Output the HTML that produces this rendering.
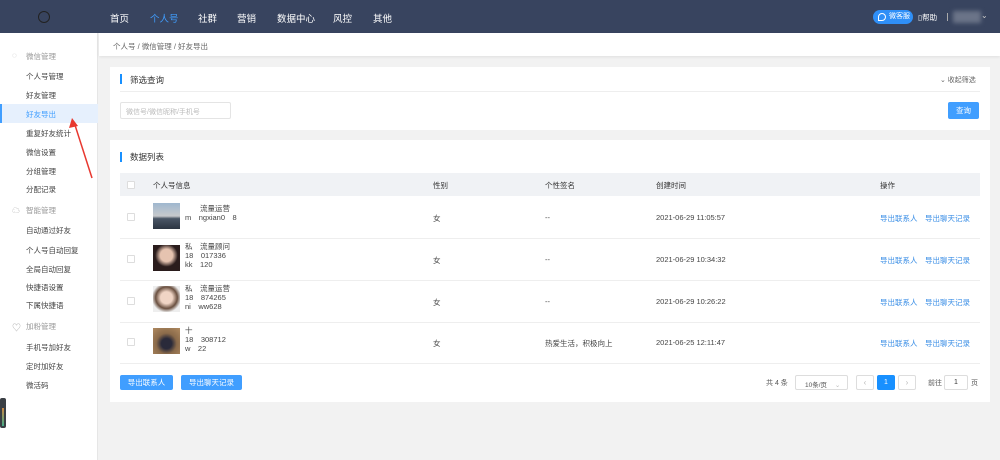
<!DOCTYPE html>
<html><head><meta charset="utf-8"><style>
*{margin:0;padding:0;box-sizing:border-box}
body{width:1000px;height:460px;overflow:hidden;background:#f2f2f2;font-family:"Liberation Sans","Noto Sans CJK SC",sans-serif;font-size:8px;color:#333;position:relative}
.abs{position:absolute}
.hdr{left:0;top:0;width:1000px;height:33px;background:#38445f}
.nav{top:11px;color:#fff;font-size:9.5px}
.side{left:0;top:33px;width:98px;height:427px;background:#fff;border-right:1px solid #e6e6e6}
.si{left:26px;font-size:7.5px;color:#444}
.sg{left:26px;font-size:7.5px;color:#999}
.card{background:#fff}
.th{font-size:7.5px;color:#333}
.cb{width:8px;height:8px;border:1px solid #ddd;border-radius:1px;background:#fff}
.td{font-size:7.5px;color:#444}
.lnk{font-size:7.5px;color:#3a8ee6}
.btn{background:#409eff;color:#fff;font-size:7.5px;text-align:center;border-radius:2px}
.bar{width:2px;height:10px;background:#1890ff}
.line{height:1px;background:#eee}
.blur{background:#e9e9ec;filter:blur(1px)}
</style></head><body>
<div class="abs hdr"></div>
<div class="abs" style="left:38px;top:11px;width:12px;height:12px;border:1.5px solid #222;border-radius:50%"></div>
<div class="abs nav" style="left:110px">首页</div>
<div class="abs nav" style="left:150px;color:#409eff">个人号</div>
<div class="abs nav" style="left:198px">社群</div>
<div class="abs nav" style="left:237px">营销</div>
<div class="abs nav" style="left:277px">数据中心</div>
<div class="abs nav" style="left:333px">风控</div>
<div class="abs nav" style="left:373px">其他</div>
<div class="abs" style="left:873px;top:10px;width:40px;height:14px;border-radius:7px;background:#2f8ff7;color:#fff;font-size:7px;line-height:14px;padding-left:16px">微客服</div>
<div class="abs" style="left:878px;top:13px;width:8px;height:8px;border:1.5px solid #fff;border-radius:50% 50% 50% 0"></div>
<div class="abs" style="left:918px;top:12px;color:#fff;font-size:7.5px">▯帮助</div>
<div class="abs" style="left:947px;top:13px;width:1px;height:8px;background:#aaa"></div>
<div class="abs" style="left:953px;top:11px;width:28px;height:12px;background:#6b7488;filter:blur(2px)"></div>
<div class="abs" style="left:981px;top:11px;color:#ccc;font-size:8px">⌄</div>

<div class="abs side"></div>
<div class="abs" style="left:12px;top:51px;color:#aaa;font-size:8px">◌</div>
<div class="abs sg" style="top:51px">微信管理</div>
<div class="abs si" style="top:71px">个人号管理</div>
<div class="abs si" style="top:90px">好友管理</div>
<div class="abs" style="left:0;top:104px;width:98px;height:19px;background:#e6f0fd;border-left:2px solid #409eff"></div>
<div class="abs si" style="top:109px;color:#409eff">好友导出</div>
<div class="abs si" style="top:128px">重复好友统计</div>
<div class="abs si" style="top:147px">微信设置</div>
<div class="abs si" style="top:166px">分组管理</div>
<div class="abs si" style="top:184px">分配记录</div>
<div class="abs" style="left:12px;top:205px;color:#aaa;font-size:8px">☁</div>
<div class="abs sg" style="top:205px">智能管理</div>
<div class="abs si" style="top:225px">自动通过好友</div>
<div class="abs si" style="top:245px">个人号自动回复</div>
<div class="abs si" style="top:264px">全局自动回复</div>
<div class="abs si" style="top:282px">快捷语设置</div>
<div class="abs si" style="top:300px">下属快捷语</div>
<div class="abs" style="left:12px;top:321px;color:#aaa;font-size:9px">♡</div>
<div class="abs sg" style="top:321px">加粉管理</div>
<div class="abs si" style="top:342px">手机号加好友</div>
<div class="abs si" style="top:361px">定时加好友</div>
<div class="abs si" style="top:380px">微活码</div>
<div class="abs" style="left:0;top:398px;width:6px;height:30px;background:#3a3f44;border-radius:2px"></div>
<div class="abs" style="left:2px;top:408px;width:2px;height:18px;background:linear-gradient(#c84,#4a8)"></div>
<svg class="abs" style="left:68px;top:118px" width="28" height="62"><line x1="24" y1="60" x2="6" y2="4" stroke="#e8382f" stroke-width="1.5"/><polygon points="4,0 1,10 10,8" fill="#e8382f"/></svg>

<div class="abs" style="left:99px;top:33px;width:901px;height:23px;background:#fff;box-shadow:0 1px 3px rgba(0,0,0,.08)"></div>
<div class="abs" style="left:113px;top:41px;font-size:7.5px;color:#666">个人号 / 微信管理 / 好友导出</div>

<div class="abs card" style="left:110px;top:67px;width:880px;height:63px"></div>
<div class="abs bar" style="left:120px;top:74px"></div>
<div class="abs" style="left:130px;top:74px;font-size:8.5px;color:#333">筛选查询</div>
<div class="abs" style="left:940px;top:75px;font-size:7px;color:#666">⌄ 收起筛选</div>
<div class="abs line" style="left:120px;top:91px;width:860px"></div>
<div class="abs" style="left:120px;top:102px;width:111px;height:17px;border:1px solid #e4e4e4;border-radius:2px;font-size:7px;color:#bbb;padding:4px 5px">微信号/微信昵称/手机号</div>
<div class="abs btn" style="left:948px;top:102px;width:31px;height:17px;line-height:17px">查询</div>

<div class="abs card" style="left:110px;top:140px;width:880px;height:262px"></div>
<div class="abs bar" style="left:120px;top:152px"></div>
<div class="abs" style="left:130px;top:151px;font-size:8.5px;color:#333">数据列表</div>
<div class="abs" style="left:120px;top:173px;width:860px;height:23px;background:#f0f2f5"></div>
<div class="abs cb" style="left:127px;top:181px"></div>
<div class="abs th" style="left:153px;top:180px">个人号信息</div>
<div class="abs th" style="left:433px;top:180px">性别</div>
<div class="abs th" style="left:545px;top:180px">个性签名</div>
<div class="abs th" style="left:656px;top:180px">创建时间</div>
<div class="abs th" style="left:880px;top:180px">操作</div>

<!-- rows -->
<div class="abs line" style="left:120px;top:238px;width:860px"></div>
<div class="abs line" style="left:120px;top:280px;width:860px"></div>
<div class="abs line" style="left:120px;top:322px;width:860px"></div>
<div class="abs line" style="left:120px;top:363px;width:860px"></div>

<div class="abs cb" style="left:127px;top:213px"></div>
<div class="abs" style="left:153px;top:203px;width:27px;height:26px;background:linear-gradient(#9fb7cf,#c7c9cc 50%,#4a5666 60%,#2c3542)"></div>
<div class="abs td" style="left:185px;top:204px;line-height:9px">　　流量运营<br>m　ngxian0　8</div>
<div class="abs td" style="left:433px;top:213px">女</div>
<div class="abs td" style="left:545px;top:213px">--</div>
<div class="abs td" style="left:656px;top:213px">2021-06-29 11:05:57</div>
<div class="abs lnk" style="left:880px;top:213px">导出联系人　导出聊天记录</div>

<div class="abs cb" style="left:127px;top:255px"></div>
<div class="abs" style="left:153px;top:245px;width:27px;height:26px;background:radial-gradient(circle at 50% 40%,#e6c3b0 30%,#2a1c1c 55%)"></div>
<div class="abs td" style="left:185px;top:242px;line-height:9px">私　流量顾问<br>18　017336<br>kk　120</div>
<div class="abs td" style="left:433px;top:255px">女</div>
<div class="abs td" style="left:545px;top:255px">--</div>
<div class="abs td" style="left:656px;top:255px">2021-06-29 10:34:32</div>
<div class="abs lnk" style="left:880px;top:255px">导出联系人　导出聊天记录</div>

<div class="abs cb" style="left:127px;top:297px"></div>
<div class="abs" style="left:153px;top:286px;width:27px;height:26px;background:radial-gradient(circle at 50% 45%,#f0d5c5 30%,#6a5040 55%,#eee 75%)"></div>
<div class="abs td" style="left:185px;top:284px;line-height:9px">私　流量运营　<br>18　874265<br>ni　ww628</div>
<div class="abs td" style="left:433px;top:297px">女</div>
<div class="abs td" style="left:545px;top:297px">--</div>
<div class="abs td" style="left:656px;top:297px">2021-06-29 10:26:22</div>
<div class="abs lnk" style="left:880px;top:297px">导出联系人　导出聊天记录</div>

<div class="abs cb" style="left:127px;top:338px"></div>
<div class="abs" style="left:153px;top:328px;width:27px;height:26px;background:radial-gradient(circle at 50% 60%,#2a2a3a 25%,#8a6a4a 50%,#b08a60)"></div>
<div class="abs td" style="left:185px;top:326px;line-height:9px">十<br>18　308712<br>w　22</div>
<div class="abs td" style="left:433px;top:338px">女</div>
<div class="abs td" style="left:545px;top:338px">热爱生活，积极向上</div>
<div class="abs td" style="left:656px;top:338px">2021-06-25 12:11:47</div>
<div class="abs lnk" style="left:880px;top:338px">导出联系人　导出聊天记录</div>

<div class="abs btn" style="left:120px;top:375px;width:53px;height:15px;line-height:15px">导出联系人</div>
<div class="abs btn" style="left:181px;top:375px;width:61px;height:15px;line-height:15px">导出聊天记录</div>
<div class="abs" style="left:766px;top:378px;font-size:7px;color:#555">共 4 条</div>
<div class="abs" style="left:795px;top:375px;width:53px;height:15px;border:1px solid #ddd;border-radius:2px;font-size:6.5px;color:#555;padding:3px 0 0 9px">10条/页 <span style="color:#bbb;margin-left:6px">⌄</span></div>
<div class="abs" style="left:856px;top:375px;width:18px;height:15px;border:1px solid #ddd;border-radius:2px;color:#bbb;text-align:center;line-height:13px">‹</div>
<div class="abs" style="left:877px;top:375px;width:18px;height:15px;background:#1890ff;border-radius:2px;color:#fff;text-align:center;line-height:15px;font-size:7px">1</div>
<div class="abs" style="left:898px;top:375px;width:18px;height:15px;border:1px solid #ddd;border-radius:2px;color:#bbb;text-align:center;line-height:13px">›</div>
<div class="abs" style="left:928px;top:378px;font-size:7px;color:#555">前往</div>
<div class="abs" style="left:944px;top:375px;width:24px;height:15px;border:1px solid #ddd;border-radius:2px;text-align:center;line-height:13px;font-size:7px">1</div>
<div class="abs" style="left:971px;top:378px;font-size:7px;color:#555">页</div>
</body></html>
